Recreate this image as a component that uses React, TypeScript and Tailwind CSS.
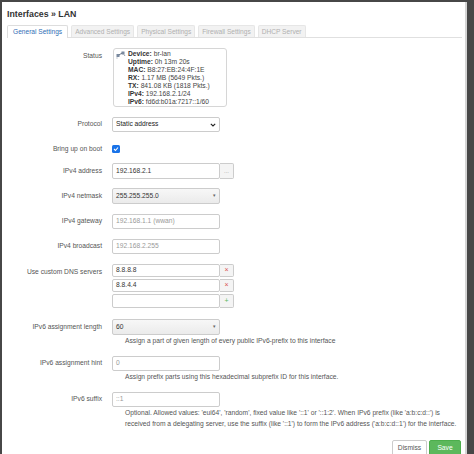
import React from 'react';

const font = { fontFamily: '"Liberation Sans", Arial, sans-serif' };

const Label: React.FC<{ text: string }> = ({ text }) => (
  <div className="w-[100px] shrink-0 text-right text-[6.7px] text-[#555]">{text}</div>
);

const TextInput: React.FC<{ value?: string; placeholder?: string }> = ({ value, placeholder }) => (
  <div className="w-[108px] h-full border border-[#ccc] rounded-[2px] bg-white flex items-center px-[3px] text-[6.7px]">
    {value ? <span className="text-[#333]">{value}</span> : <span className="text-[#999]">{placeholder}</span>}
  </div>
);

const SideButton: React.FC<{ children: React.ReactNode }> = ({ children }) => (
  <div className="w-[14px] h-full border border-l-0 border-[#ccc] rounded-r-[2px] bg-[#f4f4f4] flex items-center justify-center text-[6px]">
    {children}
  </div>
);

const Help: React.FC<{ children: React.ReactNode }> = ({ children }) => (
  <div className="pl-[123px] text-[6.7px] leading-[11px] text-[#555]">{children}</div>
);

const StatusLine: React.FC<{ k: string; v: string }> = ({ k, v }) => (
  <div className="h-[8px] leading-[8px] whitespace-nowrap">
    <b className="text-[#333]">{k}</b> <span className="text-[#444]">{v}</span>
  </div>
);

export default function App() {
  return (
    <div className="w-[474px] h-[454px] bg-[#474747] overflow-hidden pt-[2px] pl-[2px]" style={font}>
      <div className="w-[465px] h-[470px] bg-white border-r-2 border-[#d4d4d4]">
        {/* Title */}
        <div className="pt-[7px] pl-[5px] h-[23px] text-[8.8px] leading-[10px] font-bold text-[#333]">
          Interfaces » LAN
        </div>

        {/* Tabs */}
        <div className="ml-[5px] mr-[3px] flex items-end h-[13px] border-b border-[#e0e0e0] text-[6.6px]">
          <div className="h-[13px] px-[5px] flex items-center bg-white border border-b-0 border-[#ddd] rounded-t-[2px] text-[#2f6eb5] -mb-px pb-px">
            General Settings
          </div>
          {['Advanced Settings', 'Physical Settings', 'Firewall Settings', 'DHCP Server'].map((t) => (
            <div key={t} className="ml-[3px] h-[12px] px-[3px] flex items-center bg-[#f2f2f2] border border-b-0 border-[#e6e6e6] rounded-t-[2px] text-[#b0b0b0]">
              {t}
            </div>
          ))}
        </div>

        {/* Status */}
        <div className="flex mt-[10px]">
          <div className="w-[100px] shrink-0 text-right text-[6.7px] text-[#555] pt-[3px]">Status</div>
          <div className="ml-[11px] w-[114px] h-[59px] border border-[#d6d6d6] rounded-[3px] bg-white flex pl-[2px] pt-[1px] text-[6.7px]">
            <svg width="10" height="8" viewBox="0 0 10 8" className="mt-[1px] shrink-0">
              <rect x="0.5" y="3" width="3" height="3" fill="#7a8aa0" />
              <rect x="5.5" y="0.5" width="3" height="3" fill="#7a8aa0" />
              <path d="M3 4 L6 2" stroke="#4a5a70" strokeWidth="0.8" />
              <path d="M1 6.5 L1 7.5 M8 3.5 L9 5" stroke="#4a5a70" strokeWidth="0.6" />
            </svg>
            <div className="ml-[2px]">
              <StatusLine k="Device:" v="br-lan" />
              <StatusLine k="Uptime:" v="0h 13m 20s" />
              <StatusLine k="MAC:" v="B8:27:EB:24:4F:1E" />
              <StatusLine k="RX:" v="1.17 MB (5649 Pkts.)" />
              <StatusLine k="TX:" v="841.08 KB (1818 Pkts.)" />
              <StatusLine k="IPv4:" v="192.168.2.1/24" />
              <StatusLine k="IPv6:" v="fd6d:b01a:7217::1/60" />
            </div>
          </div>
        </div>

        {/* Protocol */}
        <div className="flex items-center h-[15px] mt-[10px]">
          <Label text="Protocol" />
          <div className="ml-[10px] w-[108px] h-full border border-[#ccc] rounded-[2px] bg-white flex items-center justify-between px-[3px] text-[6.7px] text-[#222]">
            <span>Static address</span>
            <svg width="6" height="4" viewBox="0 0 6 4"><path d="M0.8 0.8 L3 3 L5.2 0.8" stroke="#222" strokeWidth="1.1" fill="none" /></svg>
          </div>
        </div>

        {/* Bring up on boot */}
        <div className="flex items-center h-[8px] mt-[13px]">
          <Label text="Bring up on boot" />
          <div className="ml-[10px] w-[8px] h-[8px] rounded-[1.5px] bg-[#1a73e8] flex items-center justify-center">
            <svg width="6" height="6" viewBox="0 0 6 6"><path d="M1 3 L2.5 4.5 L5 1.5" stroke="white" strokeWidth="1.1" fill="none" /></svg>
          </div>
        </div>

        {/* IPv4 address */}
        <div className="flex items-center h-[16px] mt-[10px]">
          <Label text="IPv4 address" />
          <div className="ml-[10px] flex h-full">
            <TextInput value="192.168.2.1" />
            <SideButton><span className="text-[#999]">...</span></SideButton>
          </div>
        </div>

        {/* IPv4 netmask */}
        <div className="flex items-center h-[16px] mt-[9px]">
          <Label text="IPv4 netmask" />
          <div className="ml-[10px] w-[108px] h-full border border-[#ccc] rounded-[2px] bg-gradient-to-b from-[#f7f7f7] to-[#ebebeb] flex items-center justify-between px-[3px] text-[6.7px] text-[#333]">
            <span>255.255.255.0</span>
            <span className="text-[5px] text-[#666]">▾</span>
          </div>
        </div>

        {/* IPv4 gateway */}
        <div className="flex items-center h-[15px] mt-[10px]">
          <Label text="IPv4 gateway" />
          <div className="ml-[10px] h-full flex"><TextInput placeholder="192.168.1.1 (wwan)" /></div>
        </div>

        {/* IPv4 broadcast */}
        <div className="flex items-center h-[15px] mt-[10px]">
          <Label text="IPv4 broadcast" />
          <div className="ml-[10px] h-full flex"><TextInput placeholder="192.168.2.255" /></div>
        </div>

        {/* DNS */}
        <div className="flex mt-[10px]">
          <div className="w-[100px] shrink-0 text-right text-[6.7px] text-[#555] pt-[3px]">Use custom DNS servers</div>
          <div className="ml-[10px] flex flex-col gap-[2px]">
            <div className="flex h-[13px]">
              <TextInput value="8.8.8.8" />
              <SideButton><span className="text-[#d9534f] text-[7px]">×</span></SideButton>
            </div>
            <div className="flex h-[13px]">
              <TextInput value="8.8.4.4" />
              <SideButton><span className="text-[#d9534f] text-[7px]">×</span></SideButton>
            </div>
            <div className="flex h-[14px]">
              <TextInput value="" placeholder="" />
              <SideButton><span className="text-[#5cb85c] text-[7px]">+</span></SideButton>
            </div>
          </div>
        </div>

        {/* IPv6 assignment length */}
        <div className="flex items-center h-[16px] mt-[11px]">
          <Label text="IPv6 assignment length" />
          <div className="ml-[10px] w-[108px] h-full border border-[#ccc] rounded-[2px] bg-gradient-to-b from-[#f7f7f7] to-[#ebebeb] flex items-center justify-between px-[3px] text-[6.7px] text-[#333]">
            <span>60</span>
            <span className="text-[5px] text-[#666]">▾</span>
          </div>
        </div>
        <Help>Assign a part of given length of every public IPv6-prefix to this interface</Help>

        {/* IPv6 assignment hint */}
        <div className="flex items-center h-[15px] mt-[10px]">
          <Label text="IPv6 assignment hint" />
          <div className="ml-[10px] h-full flex"><TextInput placeholder="0" /></div>
        </div>
        <Help>Assign prefix parts using this hexadecimal subprefix ID for this interface.</Help>

        {/* IPv6 suffix */}
        <div className="flex items-center h-[15px] mt-[10px]">
          <Label text="IPv6 suffix" />
          <div className="ml-[10px] h-full flex"><TextInput placeholder="::1" /></div>
        </div>
        <Help>
          Optional. Allowed values: 'eui64', 'random', fixed value like '::1' or '::1:2'. When IPv6 prefix (like 'a:b:c:d::') is
          <br />
          received from a delegating server, use the suffix (like '::1') to form the IPv6 address ('a:b:c:d::1') for the interface.
        </Help>

        {/* Footer buttons */}
        <div className="flex justify-end gap-[2px] mt-[11px] pr-[4px]">
          <div className="w-[35px] h-[16px] border border-[#ccc] rounded-[2px] bg-white flex items-center justify-center text-[6.7px] text-[#555]">
            Dismiss
          </div>
          <div className="w-[32px] h-[16px] border border-[#4cae4c] rounded-[2px] bg-[#5cb85c] flex items-center justify-center text-[6.7px] text-white">
            Save
          </div>
        </div>
      </div>
    </div>
  );
}
